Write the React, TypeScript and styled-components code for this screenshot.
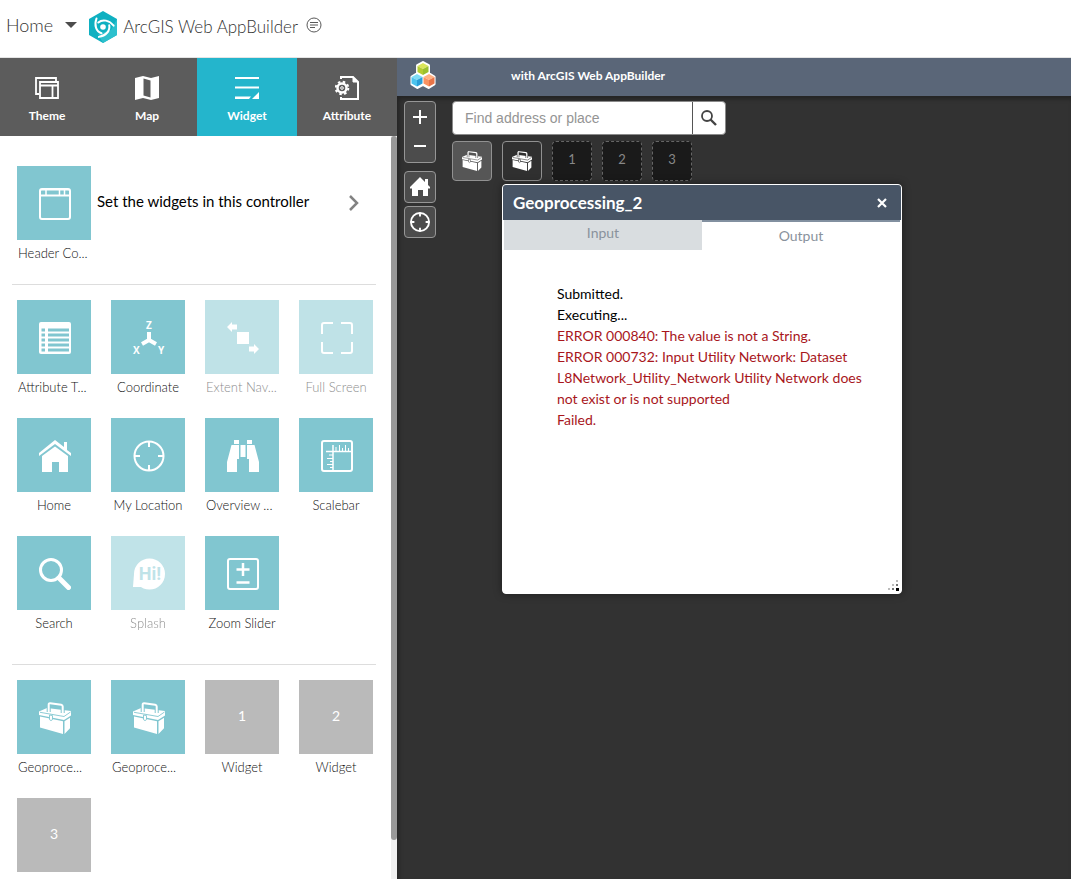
import React from "react";
import styled, { createGlobalStyle, css } from "styled-components";

const Global = createGlobalStyle`
  *, *::before, *::after { box-sizing: border-box; }
  html, body, #root { height: 100%; }
  body { margin: 0; overflow: hidden; background: #fff; font-family: Lato, "Open Sans", sans-serif; font-size: 14px; color: #000; }
  button { font-family: inherit; margin: 0; padding: 0; border: 0; background: none; cursor: pointer; color: inherit; }
  svg { display: block; flex: none; }
`;

const Page = styled.div`
  display: flex;
  flex-direction: column;
  height: 100vh;
`;

const TopBar = styled.header`
  display: flex;
  align-items: center;
  flex: none;
  height: 58px;
  padding: 0 6px 4px;
  border-bottom: 1px solid #e4e4e4;
  color: #333;
`;

const HomeMenu = styled.button`
  display: flex;
  align-items: center;
  gap: 12px;
  margin-right: 12px;
  padding-bottom: 4px;
  font-size: 18px;
  font-weight: 300;
`;

const AppTitle = styled.h1`
  margin: 0 8px 0 6px;
  font-size: 17px;
  font-weight: 300;
`;

const NoteButton = styled.button`
  padding-bottom: 4px;
`;

const Workspace = styled.div`
  display: flex;
  flex: 1;
  min-height: 0;
`;

const Sidebar = styled.aside`
  display: flex;
  flex-direction: column;
  flex: none;
  width: 397px;
  background: #fff;
`;

const TabList = styled.nav`
  display: grid;
  grid-template-columns: 97px 100px 100px 100px;
  flex: none;
  height: 78px;
  background: #5c5c5c;
`;

const SideTab = styled.button<{ $active?: boolean }>`
  display: flex;
  flex-direction: column;
  align-items: center;
  justify-content: center;
  gap: 8px;
  padding-top: 6px;
  background: ${(p) => (p.$active ? "#24b5cc" : "transparent")};
  color: #fff;
  font-size: 12px;
  line-height: 16px;
  font-weight: 700;

  &:first-child { padding-right: 3px; }
`;

const Scroller = styled.div`
  display: flex;
  flex: 1;
  min-height: 0;
  overflow: hidden;
`;

const WidgetList = styled.div`
  flex: 1;
  min-width: 0;
  overflow: hidden;
  padding: 0 15px 0 12px;
`;

const ScrollTrack = styled.div`
  flex: none;
  width: 6px;
  background: #f0f0f0;
`;

const ScrollThumb = styled.div`
  height: 704px;
  border-radius: 3px;
  background: #999;
`;

const Section = styled.section`
  display: grid;
  grid-template-columns: repeat(4, 74px);
  gap: 20px;
  padding: 15px 5px 30px;
  border-bottom: 1px solid #ddd;

  &:last-child { border-bottom: 0; }
`;

const ControllerSection = styled.section`
  display: flex;
  align-items: flex-start;
  gap: 6px;
  padding: 30px 5px 20px;
  border-bottom: 1px solid #ddd;
`;

const ControllerLink = styled.button`
  display: flex;
  flex: 1;
  align-items: center;
  justify-content: space-between;
  height: 74px;
  padding-right: 12px;
  font-size: 15px;
  color: #000;
`;

const LinkText = styled.span`
  padding-bottom: 4px;
`;

const TileButton = styled.button<{ $dim?: boolean }>`
  display: flex;
  flex-direction: column;
  width: 74px;
  height: 98px;
  opacity: ${(p) => (p.$dim ? 0.5 : 1)};
`;

const TileFace = styled.span<{ $empty?: boolean }>`
  display: flex;
  align-items: center;
  justify-content: center;
  width: 74px;
  height: 74px;
  padding: ${(p) => (p.$empty ? "0 0 4px" : "2px 0 0 2px")};
  background: ${(p) => (p.$empty ? "#bababa" : "#81c6d0")};
  color: #fff;
  font-size: 14px;
`;

const TileLabel = styled.span<{ $clipped?: boolean }>`
  width: 74px;
  padding: 4px 1px 0;
  color: #111;
  font-size: 13px;
  font-weight: 300;
  line-height: 18px;
  text-align: ${(p) => (p.$clipped ? "left" : "center")};
  white-space: nowrap;
`;

const Preview = styled.main`
  display: flex;
  flex: 1;
  flex-direction: column;
  min-width: 0;
  background: #323232;
`;

const PreviewHeader = styled.header`
  display: flex;
  align-items: center;
  flex: none;
  gap: 74px;
  height: 38px;
  padding: 0 12px 4px;
  background: #5a6678;
  color: #fff;
`;

const PreviewTitle = styled.h2`
  margin: 0;
  font-size: 12px;
  font-weight: 700;
`;

const MapArea = styled.div`
  display: flex;
  flex: 1;
  gap: 16px;
  padding: 5px 7px;
  box-shadow: inset 2px 3px 4px rgba(0, 0, 0, 0.3);
`;

const MapTools = styled.div`
  display: flex;
  flex-direction: column;
  gap: 3px;
`;

const toolFrame = css`
  border: 1px solid #969696;
  border-radius: 4px;
  background: #4c4c4c;
  color: #fff;
`;

const ZoomGroup = styled.div`
  ${toolFrame}
  display: flex;
  flex-direction: column;
  width: 32px;
  height: 62px;
  margin-bottom: 5px;
  padding-bottom: 2px;
`;

const ZoomButton = styled.button`
  display: flex;
  flex: 1;
  align-items: center;
  justify-content: center;
`;

const MapButton = styled.button`
  ${toolFrame}
  display: flex;
  align-items: center;
  justify-content: center;
  width: 32px;
  height: 32px;
`;

const MapContent = styled.div`
  display: flex;
  flex: 1;
  flex-direction: column;
  align-items: flex-start;
  min-width: 0;
`;

const SearchBox = styled.form`
  display: flex;
  width: 274px;
  height: 34px;
  margin-bottom: 6px;
  border: 1px solid #8a8a8a;
  border-radius: 4px;
  background: #fff;
`;

const SearchInput = styled.input`
  flex: 1;
  min-width: 0;
  padding: 0 12px;
  border: 0;
  border-right: 1px solid #555;
  outline: 0;
  background: transparent;
  font-family: "Liberation Sans", sans-serif;
  font-size: 14px;

  &::placeholder { color: #949494; opacity: 1; }
`;

const SearchButton = styled.button`
  display: flex;
  align-items: center;
  justify-content: center;
  width: 32px;
`;

const Controller = styled.div`
  display: flex;
  gap: 10px;
  margin-bottom: 3px;
`;

const ControllerSlot = styled.button<{ $kind?: "active" | "empty" }>`
  display: flex;
  align-items: center;
  justify-content: center;
  width: 40px;
  height: 40px;
  padding-bottom: ${(p) => (p.$kind === "empty" ? "4px" : "0")};
  border: 1px ${(p) => (p.$kind === "empty" ? "dashed #666" : "solid #919191")};
  border-radius: 4px;
  background: ${(p) => (p.$kind === "empty" ? "#1a1a1a" : p.$kind === "active" ? "#565656" : "#303030")};
  color: ${(p) => (p.$kind === "empty" ? "#888" : "#fff")};
  font-size: 13px;
`;

const Panel = styled.section`
  display: flex;
  flex-direction: column;
  width: 400px;
  height: 410px;
  margin-left: 50px;
  border: 1px solid #fff;
  border-radius: 4px;
  background: #fff;
  box-shadow: 0 0 8px rgba(0, 0, 0, 0.4);
`;

const PanelHeader = styled.header`
  display: flex;
  align-items: center;
  justify-content: space-between;
  flex: none;
  height: 35px;
  padding: 0 14px 0 10px;
  border-radius: 3px 3px 0 0;
  background: #485566;
  color: #fff;
`;

const PanelTitle = styled.h3`
  margin: 0;
  font-size: 17px;
  font-weight: 700;
`;

const PanelTabs = styled.div`
  display: grid;
  grid-template-columns: 1fr 1fr;
  flex: none;
  height: 30px;
  padding: 0 1px;
`;

const PanelTab = styled.button<{ $active?: boolean }>`
  padding-bottom: ${(p) => (p.$active ? "2px" : "6px")};
  border-top: ${(p) => (p.$active ? "2px solid #8290a0" : "0")};
  background: ${(p) => (p.$active ? "#fff" : "#d9dde0")};
  color: #89929c;
  font-size: 14px;
`;

const Messages = styled.div`
  flex: 1;
  padding: 33px 36px 0 54px;
  font-size: 14px;
  line-height: 21px;
`;

const Message = styled.p<{ $error?: boolean }>`
  margin: 0;
  color: ${(p) => (p.$error ? "#a8161c" : "#000")};
`;

const ResizeGrip = styled.div`
  align-self: flex-end;
  padding: 2px;
`;

type IconProps = { size?: number };

const swirlArm = "M7.500 7.500C5 14 7 20.500 12.500 22.300";

const AppLogo = () => (
  <svg width="28" height="32" viewBox="0 0 28 32">
    <path d="M14 0L28 8v16l-14 8L0 24V8z" fill="#0fb0c1" />
    <path d="M28 8v16l-14 8-5-9 13-4z" fill="#2cc0cd" />
    <circle cx="14" cy="16" r="2.800" fill="#fff" />
    <g fill="none" stroke="#fff" strokeWidth="2" strokeLinecap="round">
      <path d={swirlArm} />
      <path d={swirlArm} transform="rotate(120 14 16)" />
      <path d={swirlArm} transform="rotate(240 14 16)" />
    </g>
  </svg>
);

const NoteIcon = () => (
  <svg width="16" height="16" viewBox="0 0 16 16" fill="none" stroke="#595959">
    <circle cx="8" cy="8" r="7" />
    <path d="M4 5.500h8M4 8h8M4 10.500h5" />
  </svg>
);

const ThemeIcon = () => (
  <svg width="24" height="24" viewBox="0 0 24 24" fill="none" stroke="#fff" strokeWidth="1.800">
    <path d="M4 18H1V2h20v3M5 6h18v16H5zM5 9.500h18M17.500 9.500V22" />
  </svg>
);

const MapIcon = () => (
  <svg width="24" height="24" viewBox="0 0 24 24" fill="#fff" fillRule="evenodd">
    <path d="M0 2l8-2 8 2 8-2v22l-8 2-8-2-8 2zM8.500 2.500v17l7 2v-17z" />
  </svg>
);

const WidgetIcon = () => (
  <svg width="24" height="24" viewBox="0 0 24 24" fill="#fff">
    <path d="M0 1h24v2H0zM0 10.500h24v2H0zM0 20.500h16l-2 2.500H0zM24 16v7h-7z" />
  </svg>
);

const AttributeIcon = () => (
  <svg width="24" height="24" viewBox="0 0 24 24" fill="none" stroke="#fff">
    <path d="M6 3V1h12l5 5v17H6v-2" strokeWidth="2" />
    <path d="M18 1v5h5z" fill="#fff" />
    <circle cx="7" cy="12" r="4.500" strokeWidth="2.500" />
    <circle cx="7" cy="12" r="6.300" strokeWidth="2" strokeDasharray="2.500 2.450" />
    <circle cx="7" cy="12" r="1.300" strokeWidth="1" />
  </svg>
);

const HeaderIcon = () => (
  <svg width="32" height="32" viewBox="0 0 32 32" fill="none" stroke="#fff">
    <rect x="1" y="1" width="30" height="30" rx="2" strokeWidth="2" />
    <path d="M1 7.500h30" strokeWidth="2" />
    <path d="M7 1v6M20.500 1v6M25.500 1v6" strokeWidth="1.500" />
    <path d="M2 2h28" />
  </svg>
);

const TableIcon = () => (
  <svg width="32" height="32" viewBox="0 0 32 32">
    <rect width="32" height="32" rx="2" fill="#fff" />
    <path d="M2.500 8h3.500M9 8h21M2.500 13h3.500M9 13h21M2.500 18h3.500M9 18h21M2.500 23h3.500M9 23h21M2.500 28h3.500M9 28h21" stroke="#81c6d0" strokeWidth="3" />
  </svg>
);

const AxisLetter = styled.text`
  fill: #fff;
  font-family: "Open Sans", sans-serif;
  font-size: 10px;
  font-weight: 700;
`;

const CoordinateIcon = () => (
  <svg width="40" height="42" viewBox="-3 -4 40 42">
    <path d="M17 11v8M17 19l-7 4M17 19l7 4" stroke="#fff" strokeWidth="4" fill="none" />
    <AxisLetter x="14" y="8">Z</AxisLetter>
    <AxisLetter x="1" y="33">X</AxisLetter>
    <AxisLetter x="26" y="33">Y</AxisLetter>
  </svg>
);

const ExtentIcon = () => (
  <svg width="32" height="32" viewBox="0 0 32 32" fill="#fff">
    <path d="M10 10h12v12H10zM0 5l5-5v2.500h5v5H5V10zM32 27l-5-5v2.500h-5v5h5V32z" />
  </svg>
);

const FullScreenIcon = () => (
  <svg width="32" height="32" viewBox="0 0 32 32" fill="none" stroke="#fff" strokeWidth="2">
    <path d="M1 12V3q0-2 2-2h9M20 1h9q2 0 2 2v9M31 20v9q0 2-2 2h-9M12 31H3q-2 0-2-2v-9" />
  </svg>
);

const HomeIcon = () => (
  <svg width="32" height="32" viewBox="0 0 32 32" fill="#fff">
    <path d="M16 0l9 7V2h3v8l4 3v3L16 4 0 16v-3zM3 16l13-9.500L29 16v16h-9V22h-7v10H3z" />
  </svg>
);

const SolidHomeIcon = () => (
  <svg width="20" height="20" viewBox="0 0 20 20" fill="#fff">
    <path d="M10 0l5 5V2h3v6l2 2v1.500h-2V19h-5v-6H8v6H2v-7.500H0V10z" />
  </svg>
);

const LocationIcon = ({ size = 32 }: IconProps) => (
  <svg width={size} height={size} viewBox="0 0 32 32" fill="none" stroke="#fff" strokeWidth={size < 32 ? 3 : 2}>
    <circle cx="16" cy="16" r="14.500" />
    <path d="M16 1v6M16 25v6M1 16h6M25 16h6" />
  </svg>
);

const BinocularsIcon = () => (
  <svg width="32" height="32" viewBox="0 0 32 32" fill="#fff">
    <path d="M7 0h5v4H7zM20 0h5v4h-5zM4.500 5H12v14h-2v13H0V22zM27.500 5H20v14h2v13h10V22zM13.500 5h5v12h-5z" />
  </svg>
);

const ScalebarIcon = () => (
  <svg width="32" height="32" viewBox="0 0 32 32" fill="none" stroke="#fff">
    <rect x="1" y="1" width="30" height="30" rx="2" strokeWidth="2" />
    <path d="M12 5v26M5 11.500h26" strokeWidth="1.500" />
    <path d="M15 7v4M18.500 5v6M21.500 8v3M24.500 5v6M27.500 8v3M8 15h4M6 18.500h6M9 21.500h3M6 24.500h6M9 27.500h3" />
  </svg>
);

const SearchIcon = () => (
  <svg width="32" height="32" viewBox="0 0 32 32" fill="none" stroke="#fff">
    <circle cx="12" cy="12" r="10.500" strokeWidth="3" />
    <path d="M20 20l9.500 9.500" strokeWidth="5" strokeLinecap="round" />
  </svg>
);

const FindIcon = () => (
  <svg width="16" height="16" viewBox="0 0 16 16" fill="none" stroke="#444">
    <circle cx="6" cy="6" r="5" strokeWidth="1.800" />
    <path d="M9.500 9.500l5.500 5.500" strokeWidth="2.400" />
  </svg>
);

const HiText = styled.text`
  fill: #81c6d0;
  font-family: Roboto, sans-serif;
  font-size: 18px;
  font-weight: 700;
`;

const SplashIcon = () => (
  <svg width="32" height="32" viewBox="0 0 32 32">
    <circle cx="16.500" cy="16" r="15.500" fill="#fff" />
    <path d="M1 16L0 29h15z" fill="#fff" />
    <HiText x="17" y="22" textAnchor="middle">Hi!</HiText>
  </svg>
);

const ZoomSliderIcon = () => (
  <svg width="32" height="32" viewBox="0 0 32 32" fill="none" stroke="#fff" strokeWidth="2">
    <rect x="1" y="1" width="30" height="30" rx="2" />
    <path d="M9.500 11.500h13M16 5v13M9.500 24.500h13" strokeWidth="2.500" />
  </svg>
);

const ToolboxIcon = ({ size = 32, line = "#81c6d0" }: IconProps & { line?: string }) => (
  <svg width={size} height={size} viewBox="0 0 32 32">
    <path d="M0 9.500L8 6l24 3v4.500L25 18 0 13z" fill="#fff" />
    <path d="M1 14.500l23 4.700V32L1 25.500zM25.500 19.200l5.500-3.500v10.500L25.500 32z" fill="#fff" />
    <path d="M1 10.300l24 4.200 6.500-4.500" fill="none" stroke={line} strokeWidth="0.900" />
    <path d="M9.700 10V2.500q0-1.500 1.500-1.300l11 1.500q1.500.3 1.500 1.800V11" fill="none" stroke={line} strokeWidth="4" />
    <path d="M9.700 10.500V2.500q0-1.500 1.500-1.300l11 1.500q1.500.3 1.500 1.800V11.500" fill="none" stroke="#fff" strokeWidth="2" />
    <path d="M10.500 13l3 .6v4q-1.500 2-3 0z" fill="#fff" stroke={line} strokeWidth="0.900" />
  </svg>
);

const CubesLogo = () => (
  <svg width="28" height="28" viewBox="0 0 28 28">
    <path d="M14 1.500l6 3v8l6 3.500v7l-6 3.500-6-3-6 3-6-3.500v-7l6-3.500v-8z" transform="translate(1 0) scale(0.930 1)" fill="#fff" stroke="#fff" strokeWidth="3" strokeLinejoin="round" />
    <path d="M14 2l5.500 3L14 8 8.500 5z" fill="#dbe65a" /><path d="M8.500 5L14 8v6l-5.500-3z" fill="#b5cc32" /><path d="M19.500 5L14 8v6l5.500-3z" fill="#9cc02e" />
    <path d="M8 13l5.500 3L8 19l-5.500-3z" fill="#7fdcf5" /><path d="M2.500 16L8 19v6.500l-5.500-3z" fill="#4cc3ee" /><path d="M13.500 16L8 19v6.500l5.500-3z" fill="#2a9fd8" />
    <path d="M20 13l5.500 3-5.500 3-5.500-3z" fill="#ffb184" /><path d="M14.500 16l5.500 3v6.500l-5.500-3z" fill="#f99262" /><path d="M25.500 16L20 19v6.500l5.500-3z" fill="#e87448" />
  </svg>
);

type TileProps = { label?: string; dim?: boolean; empty?: boolean; children: React.ReactNode };

const Tile = ({ label, dim, empty, children }: TileProps) => (
  <TileButton type="button" $dim={dim}>
    <TileFace $empty={empty}>{children}</TileFace>
    {label && <TileLabel $clipped={label.endsWith("...")}>{label}</TileLabel>}
  </TileButton>
);

export default function App() {
  return (
    <Page>
      <Global />
      <TopBar>
        <HomeMenu type="button">
          Home
          <svg width="12" height="6" viewBox="0 0 12 6"><path d="M0 0h12L6 6z" fill="#4c4c4c" /></svg>
        </HomeMenu>
        <AppLogo />
        <AppTitle>ArcGIS Web AppBuilder</AppTitle>
        <NoteButton type="button" aria-label="App details"><NoteIcon /></NoteButton>
      </TopBar>
      <Workspace>
        <Sidebar>
          <TabList>
            <SideTab type="button"><ThemeIcon />Theme</SideTab>
            <SideTab type="button"><MapIcon />Map</SideTab>
            <SideTab type="button" $active><WidgetIcon />Widget</SideTab>
            <SideTab type="button"><AttributeIcon />Attribute</SideTab>
          </TabList>
          <Scroller>
            <WidgetList>
              <ControllerSection>
                <Tile label="Header Co..."><HeaderIcon /></Tile>
                <ControllerLink type="button">
                  <LinkText>Set the widgets in this controller</LinkText>
                  <svg width="10" height="16" viewBox="0 0 10 16"><path d="M1 1l7 7-7 7" fill="none" stroke="#828282" strokeWidth="2.500" /></svg>
                </ControllerLink>
              </ControllerSection>
              <Section>
                <Tile label="Attribute T..."><TableIcon /></Tile>
                <Tile label="Coordinate"><CoordinateIcon /></Tile>
                <Tile label="Extent Nav..." dim><ExtentIcon /></Tile>
                <Tile label="Full Screen" dim><FullScreenIcon /></Tile>
                <Tile label="Home"><HomeIcon /></Tile>
                <Tile label="My Location"><LocationIcon /></Tile>
                <Tile label="Overview ..."><BinocularsIcon /></Tile>
                <Tile label="Scalebar"><ScalebarIcon /></Tile>
                <Tile label="Search"><SearchIcon /></Tile>
                <Tile label="Splash" dim><SplashIcon /></Tile>
                <Tile label="Zoom Slider"><ZoomSliderIcon /></Tile>
              </Section>
              <Section>
                <Tile label="Geoproce..."><ToolboxIcon /></Tile>
                <Tile label="Geoproce..."><ToolboxIcon /></Tile>
                <Tile label="Widget" empty>1</Tile>
                <Tile label="Widget" empty>2</Tile>
                <Tile empty>3</Tile>
              </Section>
            </WidgetList>
            <ScrollTrack><ScrollThumb /></ScrollTrack>
          </Scroller>
        </Sidebar>
        <Preview>
          <PreviewHeader>
            <CubesLogo />
            <PreviewTitle>with ArcGIS Web AppBuilder</PreviewTitle>
          </PreviewHeader>
          <MapArea>
            <MapTools>
              <ZoomGroup>
                <ZoomButton type="button" aria-label="Zoom in">
                  <svg width="16" height="16" viewBox="0 0 16 16"><path d="M8 1v14M1 8h14" stroke="#fff" strokeWidth="2" /></svg>
                </ZoomButton>
                <ZoomButton type="button" aria-label="Zoom out">
                  <svg width="16" height="16" viewBox="0 0 16 16"><path d="M2 8h12" stroke="#fff" strokeWidth="2" /></svg>
                </ZoomButton>
              </ZoomGroup>
              <MapButton type="button" aria-label="Default extent"><SolidHomeIcon /></MapButton>
              <MapButton type="button" aria-label="My location"><LocationIcon size={20} /></MapButton>
            </MapTools>
            <MapContent>
              <SearchBox onSubmit={(e) => e.preventDefault()}>
                <SearchInput aria-label="Find address or place" placeholder="Find address or place" />
                <SearchButton type="submit" aria-label="Search"><FindIcon /></SearchButton>
              </SearchBox>
              <Controller>
                <ControllerSlot type="button" $kind="active" aria-label="Geoprocessing"><ToolboxIcon size={20} line="#565656" /></ControllerSlot>
                <ControllerSlot type="button" aria-label="Geoprocessing 2"><ToolboxIcon size={20} line="#303030" /></ControllerSlot>
                <ControllerSlot type="button" $kind="empty">1</ControllerSlot>
                <ControllerSlot type="button" $kind="empty">2</ControllerSlot>
                <ControllerSlot type="button" $kind="empty">3</ControllerSlot>
              </Controller>
              <Panel>
                <PanelHeader>
                  <PanelTitle>Geoprocessing_2</PanelTitle>
                  <button type="button" aria-label="Close">
                    <svg width="10" height="10" viewBox="0 0 10 10"><path d="M1 1l8 8M9 1L1 9" stroke="#fff" strokeWidth="2.200" /></svg>
                  </button>
                </PanelHeader>
                <PanelTabs>
                  <PanelTab type="button">Input</PanelTab>
                  <PanelTab type="button" $active>Output</PanelTab>
                </PanelTabs>
                <Messages>
                  <Message>Submitted.</Message>
                  <Message>Executing...</Message>
                  <Message $error>ERROR 000840: The value is not a String.</Message>
                  <Message $error>ERROR 000732: Input Utility Network: Dataset L8Network_Utility_Network Utility Network does not exist or is not supported</Message>
                  <Message $error>Failed.</Message>
                </Messages>
                <ResizeGrip>
                  <svg width="11" height="11" viewBox="0 0 11 11">
                    <path d="M8 0h2v2H8zM4 4h2v2H4zM0 8h2v2H0z" fill="#bbb" />
                    <path d="M8 4h2v2H8zM4 8h2v2H4z" fill="#777" />
                    <path d="M8 8h3v3H8z" fill="#000" />
                  </svg>
                </ResizeGrip>
              </Panel>
            </MapContent>
          </MapArea>
        </Preview>
      </Workspace>
    </Page>
  );
}
